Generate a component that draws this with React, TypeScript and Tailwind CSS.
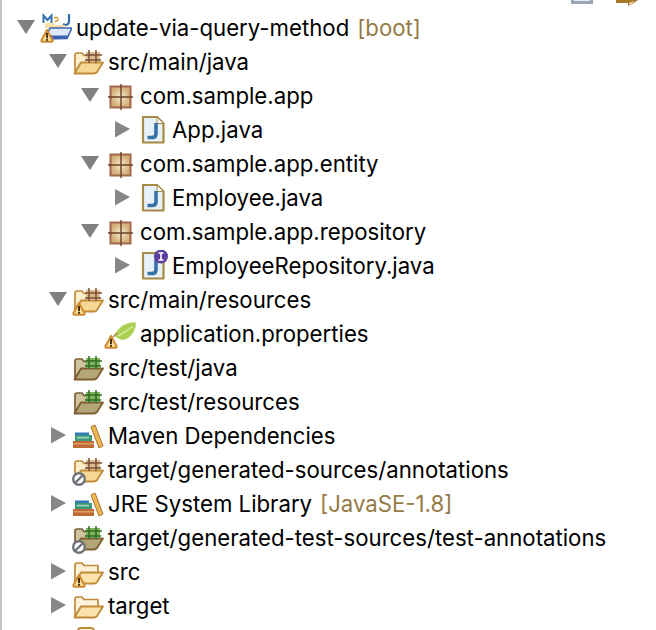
import type { ReactNode } from 'react';

type Kind = 'project' | 'srcOpen' | 'srcWarn' | 'pkg' | 'java' | 'javaI' | 'props' | 'srcTest' | 'lib' | 'srcBan' | 'srcTestBan' | 'folderWarn' | 'folder';

type Row = { level: number; twisty?: 'open' | 'closed'; icon: Kind; label: string; tag?: string };

const rows: Row[] = [
    { level: 0, twisty: 'open', icon: 'project', label: 'update-via-query-method', tag: '[boot]' },
    { level: 1, twisty: 'open', icon: 'srcOpen', label: 'src/main/java' },
    { level: 2, twisty: 'open', icon: 'pkg', label: 'com.sample.app' },
    { level: 3, twisty: 'closed', icon: 'java', label: 'App.java' },
    { level: 2, twisty: 'open', icon: 'pkg', label: 'com.sample.app.entity' },
    { level: 3, twisty: 'closed', icon: 'java', label: 'Employee.java' },
    { level: 2, twisty: 'open', icon: 'pkg', label: 'com.sample.app.repository' },
    { level: 3, twisty: 'closed', icon: 'javaI', label: 'EmployeeRepository.java' },
    { level: 1, twisty: 'open', icon: 'srcWarn', label: 'src/main/resources' },
    { level: 2, icon: 'props', label: 'application.properties' },
    { level: 1, icon: 'srcTest', label: 'src/test/java' },
    { level: 1, icon: 'srcTest', label: 'src/test/resources' },
    { level: 1, twisty: 'closed', icon: 'lib', label: 'Maven Dependencies' },
    { level: 1, icon: 'srcBan', label: 'target/generated-sources/annotations' },
    { level: 1, twisty: 'closed', icon: 'lib', label: 'JRE System Library', tag: '[JavaSE-1.8]' },
    { level: 1, icon: 'srcTestBan', label: 'target/generated-test-sources/test-annotations' },
    { level: 1, twisty: 'closed', icon: 'folderWarn', label: 'src' },
    { level: 1, twisty: 'closed', icon: 'folder', label: 'target' },
];

const indent: Record<number, string> = { 0: 'pl-[14px]', 1: 'pl-[46px]', 2: 'pl-[78px]', 3: 'pl-[110px]' };

function Warn({ x = 0, y = 16 }: { x?: number; y?: number }) {
    return (
        <g transform={`translate(${x} ${y})`}>
            <path d="M7 2 L12.6 12.2 Q13 13.8 11.4 13.8 L2.6 13.8 Q1 13.8 1.4 12.2 Z" fill="#f8dc98" stroke="#cf8a33" strokeWidth="2" strokeLinejoin="round" />
            <rect x="6" y="5" width="2" height="5" fill="#4a3414" />
            <rect x="6" y="10.8" width="2" height="2" fill="#4a3414" />
        </g>
    );
}

function Ban({ x = 0, y = 17 }: { x?: number; y?: number }) {
    return (
        <g transform={`translate(${x} ${y})`}>
            <circle cx="7" cy="7" r="5.8" fill="#fff" stroke="#6f7479" strokeWidth="2.4" />
            <path d="M3 11 L11 3" stroke="#6f7479" strokeWidth="2.4" />
        </g>
    );
}

function OpenFolder({ back, front, line }: { back: string; front: string; line: string }) {
    return (
        <g strokeLinejoin="round">
            <path d="M3 27 L3 9 Q3 7 5 7 L10 7 L12 9.5 L26 9.5 L26 17 L9 17 Z" fill={back} stroke={line} strokeWidth="1.7" />
            <path d="M2.5 27.5 L9 16.5 L31 16.5 L25 26 Q24 27.5 22 27.5 Z" fill={front} stroke={line} strokeWidth="1.8" />
        </g>
    );
}

function MiniPkg({ color = '#7c4f33', fill = '#d9bd8c' }: { color?: string; fill?: string }) {
    return (
        <g>
            <rect x="14" y="6" width="14" height="10" fill={fill} />
            <path d="M13 9 H30 M13 14 H29 M17 4 V17 M24 4 V17" stroke={color} strokeWidth="1.5" fill="none" />
        </g>
    );
}

function Books() {
    return (
        <g>
            <path d="M19 7 L23 5 L31 26 L27 28 Z" fill="#efb754" stroke="#a9732a" strokeWidth="1" strokeLinejoin="round" />
            <rect x="3" y="12.5" width="14" height="3" fill="#2f79b6" />
            <rect x="3" y="15" width="17" height="6" fill="#3c9a78" />
            <rect x="5" y="16.8" width="12" height="1.6" fill="#a7d8c0" />
            <rect x="1" y="21" width="21" height="7" fill="#bf6b38" />
            <rect x="1" y="23" width="21" height="1.5" fill="#e09a66" />
        </g>
    );
}

function JavaFile() {
    return (
        <g>
            <path d="M7 3 L21 3 L27.5 9.5 L27.5 28.5 L7 28.5 Z" fill="#e8f0f7" stroke="#a58a45" strokeWidth="2.2" strokeLinejoin="round" />
            <path d="M21 3 L21 9.5 L27.5 9.5 Z" fill="#fff" stroke="#a58a45" strokeWidth="1" />
            <path d="M20 9 L20 20 Q20 23.5 16 23.5 L11.5 23.5" fill="none" stroke="#3870a8" strokeWidth="3.6" />
        </g>
    );
}

function TreeIcon({ kind }: { kind: Kind }) {
    let body: ReactNode = null;
    if (kind === 'project') {
        body = (
            <g>
                <path d="M3.5 11 V3.5 L7.5 8 L11.5 3.5 V11" fill="none" stroke="#2f6ea8" strokeWidth="1.9" />
                <path d="M14 6 Q18 4 18 8 L15 10" fill="none" stroke="#d9a63f" strokeWidth="1.6" />
                <path d="M29 2 V9 Q29 13 25 13 L23 12" fill="none" stroke="#2f6ea8" strokeWidth="2.2" />
                <path d="M5 16 L5 11 L13 11 L15 13 L25 13 L25 16 Z" fill="#f5dfa4" />
                <path d="M5 27 L10 16 L32 16 L27 26.5 Z" fill="#dfe8f6" stroke="#3f62b5" strokeWidth="1.6" strokeLinejoin="round" />
                <path d="M10 23.5 L29 23.5 L27 26.5 L8 26.5 Z" fill="#3f62b5" />
                <Warn x={0} y={16} />
            </g>
        );
    } else if (kind === 'srcOpen' || kind === 'srcWarn' || kind === 'srcBan') {
        body = (
            <g>
                <OpenFolder back="#fbeecb" front="#f5d894" line="#c08b3a" />
                <MiniPkg />
                {kind === 'srcWarn' && <Warn x={0} y={17} />}
                {kind === 'srcBan' && <Ban x={0} y={18} />}
            </g>
        );
    } else if (kind === 'srcTest' || kind === 'srcTestBan') {
        body = (
            <g>
                <OpenFolder back="#cfc4a0" front="#b3a677" line="#7e5e31" />
                <MiniPkg color="#2f6b23" fill="#7fb35c" />
                {kind === 'srcTestBan' && <Ban x={0} y={18} />}
            </g>
        );
    } else if (kind === 'pkg') {
        body = (
            <g>
                <defs>
                    <radialGradient id="pkgFill">
                        <stop offset="0%" stopColor="#f8ecc8" />
                        <stop offset="100%" stopColor="#d2ad77" />
                    </radialGradient>
                </defs>
                <rect x="6.5" y="6.5" width="20" height="21" fill="url(#pkgFill)" stroke="#a2684a" strokeWidth="2" />
                <path d="M17 4 V30 M4 17 H29" stroke="#6e3f2a" strokeWidth="1.4" />
            </g>
        );
    } else if (kind === 'java') {
        body = <JavaFile />;
    } else if (kind === 'javaI') {
        body = (
            <g>
                <JavaFile />
                <circle cx="25" cy="6.5" r="7" fill="#5b3f9e" />
                <path d="M22.5 3 H27.5 M25 3 V10 M22.5 10 H27.5" stroke="#fff" strokeWidth="1.6" />
            </g>
        );
    } else if (kind === 'props') {
        body = (
            <g>
                <path d="M11 18 Q13 9 24 5.5 Q29 4 32 5 Q31 15 24 20 Q17 24 11 18 Z" fill="#a8cf4d" stroke="#c9de8a" strokeWidth="1" />
                <path d="M14 18 Q22 14 29 8" stroke="#d8eb9f" strokeWidth="1.6" fill="none" />
                <path d="M9 19 L13 15" stroke="#b08a4a" strokeWidth="1.6" />
                <Warn x={0} y={16} />
            </g>
        );
    } else if (kind === 'lib') {
        body = <Books />;
    } else {
        body = (
            <g>
                <OpenFolder back="#fdf3da" front="#fbe3ab" line="#c08a38" />
                {kind === 'folderWarn' && <Warn x={0} y={17} />}
            </g>
        );
    }
    return (
        <svg viewBox="0 0 32 32" className="w-[32px] h-[32px] shrink-0">
            {body}
        </svg>
    );
}

function Twisty({ state }: { state?: 'open' | 'closed' }) {
    return (
        <span className="w-[24px] h-[32px] shrink-0 flex items-center">
            {state === 'open' && (
                <svg viewBox="0 0 20 16" className="w-[20px] h-[16px]">
                    <path d="M1 0 H19 L10 14 Z" fill="#808080" />
                </svg>
            )}
            {state === 'closed' && (
                <svg viewBox="0 0 20 20" className="w-[20px] h-[20px]">
                    <path d="M3 1 L18 9 L3 17.5 Z" fill="#878787" />
                </svg>
            )}
        </span>
    );
}

function TreeRow({ row }: { row: Row }) {
    return (
        <div className={`h-[34px] flex items-center ${indent[row.level]}`}>
            <Twisty state={row.twisty} />
            <TreeIcon kind={row.icon} />
            <span className="ml-[4px] whitespace-nowrap text-black">{row.label}</span>
            {row.tag && <span className="ml-[8px] whitespace-nowrap text-[#957b45]">{row.tag}</span>}
        </div>
    );
}

export default function App() {
    return (
        <div className="w-[656px] h-[630px] overflow-hidden bg-white border-l-2 border-[#c4c4c4] font-['Inter',sans-serif] text-[22.2px] leading-[34px]">
            {/* Clipped toolbar icons above the tree */}
            <div className="h-[11px] flex justify-end items-start overflow-hidden pr-[18px] gap-[23px]">
                <div className="w-[22px] h-[4px] border-x-[3px] border-b-[3px] border-[#9aa6b8] bg-[#e6f0ee]" />
                <svg viewBox="0 0 22 7" className="w-[22px] h-[7px]">
                    <path d="M0 0 H22 L18 3 L12 6 L12 3 H0 Z" fill="#a9782a" />
                    <path d="M13 3 L19 1 L14 5 Z" fill="#f6e6b8" />
                </svg>
            </div>
            {rows.map((row, i) => (
                <TreeRow key={i} row={row} />
            ))}
            <div className="h-[34px] flex items-start pl-[72px] pt-[4px]">
                <div className="ml-[3px] w-[18px] h-[10px] rounded-t-sm border-2 border-[#c08a38] bg-[#fdf3da]" />
            </div>
        </div>
    );
}
